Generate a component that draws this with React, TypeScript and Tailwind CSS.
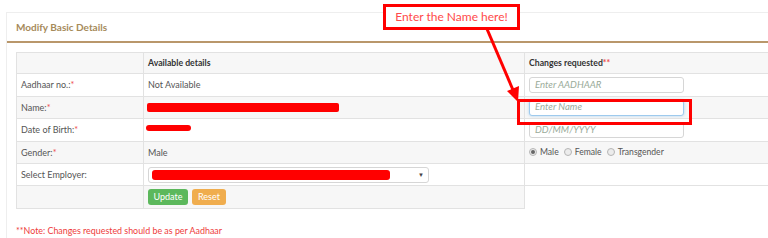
import React from 'react'

const Req = () => <span className="text-[#ee4b4b]">*</span>

function TextInput({ placeholder, focused }: { placeholder: string; focused?: boolean }) {
  return (
    <div
      className={`w-[155px] h-[16px] rounded-[3px] border bg-white flex items-center px-[5px] text-[9.6px] italic text-[#9aab9a] ${
        focused ? 'border-[#9ecaed] shadow-[0_0_3px_rgba(102,175,233,0.5)]' : 'border-[#d6d6d6]'
      }`}
    >
      {placeholder}
    </div>
  )
}

function Radio({ label, checked }: { label: string; checked?: boolean }) {
  return (
    <span className="flex items-center gap-[3px]">
      <span className="w-[8px] h-[8px] rounded-full border border-[#b5b5b5] bg-[#ececec] flex items-center justify-center">
        {checked && <span className="w-[4px] h-[4px] rounded-full bg-[#666]" />}
      </span>
      <span>{label}</span>
    </span>
  )
}

export default function App() {
  const cell = 'border border-[#e2e2e2] px-[4px] align-middle'
  const gray = 'bg-[#f7f7f7]'

  return (
    <div className="relative w-[768px] h-[238px] overflow-hidden bg-white font-['Lato',sans-serif] text-[9px] text-[#555]">
      <div className="ml-[6px] mt-[12px] w-[820px] border border-[#eee]">
        <div className="h-[30px] px-[9px] flex items-center border-b-2 border-[#b9976b] text-[10px] font-bold text-[#a68a5a]">
          Modify Basic Details
        </div>
        <div className="pt-[9px] pl-[9px] pb-[20px]">
          <table className="border-collapse w-[800px] table-fixed">
            <colgroup>
              <col className="w-[127px]" />
              <col className="w-[381px]" />
              <col />
            </colgroup>
            <tbody>
              <tr className="h-[21px]">
                <td className={`${cell} ${gray}`} />
                <td className={`${cell} ${gray} font-bold text-[8.7px] text-[#333]`}>Available details</td>
                <td className={`${cell} ${gray} font-bold text-[8.7px] text-[#333]`}>
                  Changes requested<span className="text-[#ee4b4b]">**</span>
                </td>
              </tr>
              <tr className="h-[23px]">
                <td className={cell}>Aadhaar no.:<Req /></td>
                <td className={cell}>Not Available</td>
                <td className={cell}><TextInput placeholder="Enter AADHAAR" /></td>
              </tr>
              <tr className="h-[22px]">
                <td className={`${cell} ${gray}`}>Name:<Req /></td>
                <td className={`${cell} ${gray}`}>
                  <span className="block ml-[-1px] w-[192px] h-[9px] rounded-[2px] bg-[#ff0000]" />
                </td>
                <td className={`${cell} ${gray}`}><TextInput placeholder="Enter Name" focused /></td>
              </tr>
              <tr className="h-[23px]">
                <td className={cell}>Date of Birth:<Req /></td>
                <td className={cell}>
                  <span className="block ml-[-2px] mt-[-4px] w-[45px] h-[6px] rounded-full bg-[#ff0000]" />
                </td>
                <td className={cell}><TextInput placeholder="DD/MM/YYYY" /></td>
              </tr>
              <tr className="h-[22px]">
                <td className={`${cell} ${gray}`}>Gender:<Req /></td>
                <td className={`${cell} ${gray}`}>Male</td>
                <td className={`${cell} ${gray}`}>
                  <div className="flex items-center gap-[5px] text-[8.6px]">
                    <Radio label="Male" checked />
                    <Radio label="Female" />
                    <Radio label="Transgender" />
                  </div>
                </td>
              </tr>
              <tr className="h-[22px]">
                <td className={cell}>Select Employer:</td>
                <td className={cell}>
                  <div className="w-[281px] h-[16px] rounded-[3px] border border-[#d6d6d6] bg-white flex items-center justify-between pl-[3px] pr-[4px]">
                    <span className="block w-[238px] h-[10px] rounded-[3px] bg-[#ff0000]" />
                    <span className="text-[6px] text-[#444]">▼</span>
                  </div>
                </td>
                <td className={cell} />
              </tr>
              <tr className="h-[23px]">
                <td className={`${cell} ${gray}`} />
                <td className={`${cell} ${gray}`}>
                  <div className="flex gap-[4px] text-[9px] text-white">
                    <span className="w-[40px] h-[16px] rounded-[3px] bg-[#5cb85c] flex items-center justify-center">Update</span>
                    <span className="w-[34px] h-[16px] rounded-[3px] bg-[#f0ad4e] flex items-center justify-center">Reset</span>
                  </div>
                </td>
              </tr>
            </tbody>
          </table>
          <p className="mt-[15px] text-[8.9px] text-[#ee3b3b]">**Note: Changes requested should be as per Aadhaar</p>
        </div>
      </div>

      {/* annotation overlay */}
      <div className="absolute left-[383px] top-[4px] w-[137px] h-[26px] border-[3px] border-[#ff0000] bg-white flex items-center justify-center whitespace-nowrap text-[12px] text-[#ff4a4a]">
        Enter the Name here!
      </div>
      <svg className="absolute left-0 top-0" width="768" height="238" viewBox="0 0 768 238">
        <line x1="487" y1="29" x2="513" y2="90" stroke="#ff0000" strokeWidth="3" />
        <polygon points="518,102 507,91 519,86" fill="#ff0000" />
      </svg>
      <div className="absolute left-[517px] top-[99px] w-[175px] h-[26px] border-[3px] border-[#ff0000]" />
    </div>
  )
}
